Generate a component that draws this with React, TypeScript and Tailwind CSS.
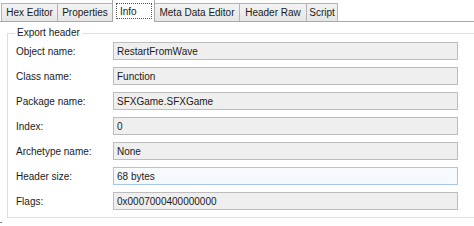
import React from 'react';

const tabs = [
  { label: 'Hex Editor', w: 'w-[57px]' },
  { label: 'Properties', w: 'w-[56px]' },
  { label: 'Info', w: 'w-[43px]', active: true },
  { label: 'Meta Data Editor', w: 'w-[86px]' },
  { label: 'Header Raw', w: 'w-[68px]' },
  { label: 'Script', w: 'w-[32px]' },
];

const fields = [
  { label: 'Object name:', value: 'RestartFromWave' },
  { label: 'Class name:', value: 'Function' },
  { label: 'Package name:', value: 'SFXGame.SFXGame' },
  { label: 'Index:', value: '0' },
  { label: 'Archetype name:', value: 'None' },
  { label: 'Header size:', value: '68 bytes', hot: true },
  { label: 'Flags:', value: '0x0007000400000000' },
];

export default function App() {
  return (
    <div
      className="relative w-[474px] h-[226px] overflow-hidden bg-white text-[10px] text-[#1a1a1a]"
      style={{ fontFamily: '"Liberation Sans", Arial, sans-serif' }}
    >
      {/* tab strip */}
      <div className="flex items-end h-[22px] pl-[1px] border-b border-[#a9a9a9]">
        {tabs.map((t) =>
          t.active ? (
            <div
              key={t.label}
              className={`${t.w} h-[23px] -mb-px -ml-px flex items-start pt-[3px] pl-[3px] bg-white border border-b-0 border-[#a9a9a9] relative z-10`}
            >
              <span className="w-[36px] h-[16px] flex items-center pl-[3px] border border-dotted border-[#555]">
                {t.label}
              </span>
            </div>
          ) : (
            <div
              key={t.label}
              className={`${t.w} h-[18px] -ml-px first:ml-0 flex items-center justify-center bg-gradient-to-b from-[#f3f3f3] to-[#e6e6e6] border border-b-0 border-[#b4b4b4]`}
            >
              {t.label}
            </div>
          )
        )}
      </div>

      {/* group box */}
      <div className="relative ml-[7px] mt-[11px] w-[490px] border border-[#dadfe2] pt-[8px] pb-[7px] pl-[8px]">
        <span className="absolute -top-[7px] left-[7px] bg-white px-[2px] leading-[12px]">Export header</span>
        <div className="flex flex-col gap-[7px]">
          {fields.map((f) => (
            <div key={f.label} className="flex items-center h-[18px]">
              <span className="w-[97px] shrink-0">{f.label}</span>
              <div
                className={`w-[345px] h-[18px] flex items-center pl-[3px] border ${
                  f.hot ? 'border-[#a7c7ea] bg-[#f7fafd]' : 'border-[#bdbdbd] bg-[#efefef]'
                }`}
              >
                {f.value}
              </div>
            </div>
          ))}
        </div>
      </div>
      <div className="mt-[4px] w-[2px] h-px bg-[#888]" />
    </div>
  );
}
